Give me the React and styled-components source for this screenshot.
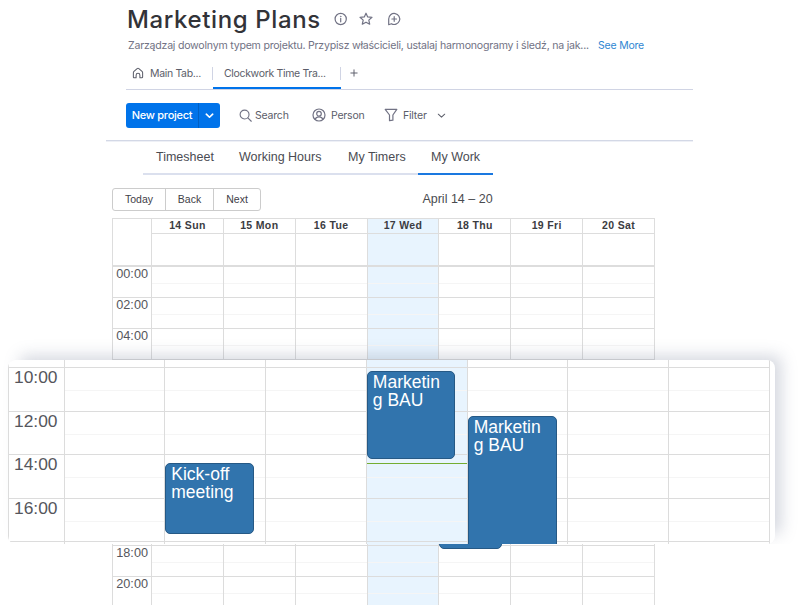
import React from 'react'
import styled, { createGlobalStyle, css } from 'styled-components'

const GlobalStyle = createGlobalStyle`
  * {
    box-sizing: border-box;
  }

  body {
    margin: 0;
    background-color: #fff;
    font-family: Inter, 'Open Sans', sans-serif;
    color: #323338;
  }
`

const Page = styled.div`
  position: relative;
  width: 800px;
  height: 605px;
  overflow: hidden;
  background-color: #fff;
  white-space: nowrap;
`

const BoardHeader = styled.header`
  width: 587px;
  height: 141px;
  margin-left: 106px;
  padding-left: 20px;
  border-bottom: 1px solid #d3d8e6;
  box-shadow: 0 1px 0 #eef0f6;
`

const TitleRow = styled.div`
  display: flex;
  align-items: center;
  height: 38px;
  padding-left: 1px;
  color: #717284;

  & svg {
    flex: none;
  }
`

const Title = styled.h1`
  width: 207px;
  margin: 0;
  font-size: 24px;
  font-weight: 500;
  line-height: 39px;
  letter-spacing: 0.62px;
  color: #323338;
`

const TitleIcons = styled.div`
  display: flex;
  align-items: center;
  gap: 11px;

  & svg:last-child {
    margin-left: 3px;
  }
`

const Description = styled.div`
  display: flex;
  align-items: center;
  height: 14px;
  padding-left: 2px;
  font-size: 10.6px;
  color: #717284;
`

const DescriptionText = styled.span`
  width: 470px;
  letter-spacing: -0.23px;
`

const SeeMore = styled.a`
  font-size: 10.5px;
  letter-spacing: -0.2px;
  color: #2f86d2;
`

const ViewTabs = styled.nav`
  display: flex;
  height: 33px;
  margin-top: 5px;
  padding-left: 6px;
  padding-bottom: 1px;
  font-size: 10.5px;
  color: #5b5d69;
  box-shadow: inset 0 -1px 0 #d0d4e4;
`

const ViewTab = styled.div`
  position: relative;
  display: flex;
  align-items: center;
  gap: 6px;
  width: ${({ $width }) => $width}px;
  padding-left: ${({ $inset }) => $inset || 0}px;
  letter-spacing: -0.33px;

  &::after {
    content: '';
    position: absolute;
    right: 0;
    top: 10px;
    height: 13px;
    border-right: 1px solid ${({ $last }) => ($last ? 'transparent' : '#d0d4e4')};
  }

  ${({ $active }) => $active && css`
    box-shadow: inset 0 -2px 0 #0073ea;
  `}
`

const Toolbar = styled.div`
  display: flex;
  align-items: center;
  height: 50px;
  font-size: 10.5px;
  color: #5b5d69;
`

const NewProject = styled.button`
  display: flex;
  align-items: center;
  width: 94px;
  height: 25px;
  margin: 0 19px 0 0;
  padding: 0;
  border: 0;
  border-radius: 3px;
  background-color: #0073ea;
  font-family: inherit;
  font-size: 11px;
  font-weight: 500;
  letter-spacing: -0.25px;
  color: #fff;
`

const NewProjectLabel = styled.span`
  flex: 1;
  line-height: 25px;
  border-right: 1px solid #0060c4;
`

const NewProjectArrow = styled.span`
  display: flex;
  justify-content: center;
  width: 21px;
`

const Tool = styled.div`
  display: flex;
  align-items: center;
  gap: ${({ $gap }) => $gap}px;
  width: ${({ $width }) => $width}px;
  letter-spacing: -0.2px;

  & svg {
    color: #717284;
  }
`

const WorkTabs = styled.nav`
  display: flex;
  width: 350px;
  height: 34px;
  margin-left: 143px;
  border-bottom: 2px solid #dbe0ee;
  font-family: 'Liberation Sans', Arial, sans-serif;
  font-size: 12.5px;
  line-height: 32px;
  color: #4a4b52;
`

const WorkTab = styled.div`
  width: ${({ $width }) => $width}px;
  height: 34px;
  padding-left: 13px;
  border-bottom: 2px solid ${({ $active }) => ($active ? '#1a78e0' : 'transparent')};
`

const CalendarToolbar = styled.div`
  display: flex;
  align-items: center;
  width: 542px;
  height: 22px;
  margin: 13px 0 8px 112px;
  font-family: 'Liberation Sans', Arial, sans-serif;
  color: #4a4b50;
`

const ButtonGroup = styled.div`
  display: flex;
  height: 23px;
  border: 1px solid #ccc;
  border-radius: 3px;
`

const GroupButton = styled.button`
  width: ${({ $width }) => $width}px;
  padding: 0;
  border: 0;
  border-left: ${({ $first }) => ($first ? '0' : '1px solid #ccc')};
  background: transparent;
  font-family: inherit;
  font-size: 10.5px;
  color: #3f4148;
`

const RangeLabel = styled.div`
  flex: 1;
  text-align: center;
  font-size: 12.5px;
`

const Calendar = styled.section`
  width: 543px;
  margin-left: 112px;
  border-top: 1px solid #ddd;
  border-right: 1px solid #ddd;
  font-family: 'Liberation Sans', Arial, sans-serif;
`

const CalendarHeader = styled.div`
  display: grid;
  grid-template-columns: 39px repeat(7, 1fr);
  height: 48px;
  border-bottom: 2px solid #ddd;
`

const HeaderCell = styled.div`
  border-left: 1px solid #ddd;
  background-color: ${({ $today }) => ($today ? '#e8f4fe' : 'transparent')};
`

const HeaderLabel = styled.div`
  height: 15px;
  border-bottom: 1px solid #ddd;
  text-align: center;
  font-size: 10.5px;
  font-weight: bold;
  line-height: 13px;
  letter-spacing: 0.35px;
  color: #3b3c42;
`

const TimeGrid = styled.div`
  display: grid;
  grid-template-columns: ${({ $gutter }) => $gutter}px repeat(7, 1fr);
`

const Column = styled.div`
  position: relative;
  border-left: 1px solid #dcdcdc;
  background-color: ${({ $today }) => ($today ? '#e8f4fe' : 'transparent')};
`

const Slot = styled.div`
  height: ${({ $height }) => $height}px;
  border-bottom: 1px solid #dcdcdc;

  &::before {
    content: '';
    display: block;
    height: 52%;
    border-bottom: ${({ $plain }) => ($plain ? '0' : '1px solid #f5f5f5')};
  }
`

const TimeSlot = styled.div`
  height: ${({ $height }) => $height}px;
  padding: ${({ $big }) => ($big ? '0 6px 0 0' : '0 3px 0 0')};
  border-bottom: 1px solid #dcdcdc;
  text-align: right;
  font-size: ${({ $big }) => ($big ? 17.4 : 12.7)}px;
  line-height: ${({ $big }) => ($big ? 19 : 14)}px;
  color: #55565c;
`

const Event = styled.div`
  position: absolute;
  top: ${({ $top }) => $top}px;
  left: 0;
  width: ${({ $width }) => $width}px;
  height: ${({ $height }) => $height}px;
  padding: 2px 12px 2px 5px;
  border: 1px solid #265985;
  border-radius: 5px;
  background-color: #3174ad;
  font-size: 17.5px;
  line-height: 17.5px;
  color: #fff;
  white-space: normal;
  overflow-wrap: anywhere;
`

const CurrentTime = styled.div`
  position: absolute;
  top: ${({ $top }) => $top}px;
  left: 0;
  right: 0;
  height: 1px;
  background-color: #74ad31;
`

// clips the panel shadow so that nothing falls under its bottom edge
const MagnifierLayer = styled.div`
  position: absolute;
  top: 320px;
  left: 0;
  width: 800px;
  height: 224px;
  padding: 40px 25px 0 8px;
  overflow: hidden;
`

const Magnifier = styled.section`
  height: 184px;
  padding-right: 5px;
  overflow: hidden;
  border-radius: 8px;
  background-color: #fff;
  box-shadow: 9px -7px 16px -3px rgba(120, 132, 155, 0.32);
  font-family: 'Liberation Sans', Arial, sans-serif;
`

const MagnifiedGrid = styled(TimeGrid)`
  height: 184px;
  border-right: 1px solid #dcdcdc;
`

const days = ['14 Sun', '15 Mon', '16 Tue', '17 Wed', '18 Thu', '19 Fri', '20 Sat']
const today = '17 Wed'
const hours = ['00:00', '02:00', '04:00', '06:00', '08:00', '10:00', '12:00', '14:00', '16:00', '18:00', '20:00']
const magnifiedHours = ['10:00', '12:00', '14:00', '16:00']

const events = {
  '15 Mon': { title: 'Kick-off meeting', top: 103, height: 71, width: 88.5 },
  '17 Wed': { title: 'Marketing BAU', top: 11, height: 88, width: 88.5 },
  '18 Thu': { title: 'Marketing BAU', top: 56, height: 140, width: 89 },
}

const Icon = ({ size = 14, width = 1.2, children }) => (
  <svg
    width={size}
    height={size}
    viewBox="0 0 14 14"
    fill="none"
    stroke="currentColor"
    strokeWidth={width}
    strokeLinecap="round"
    strokeLinejoin="round"
  >
    {children}
  </svg>
)

const InfoIcon = () => (
  <Icon>
    <circle cx="6.7" cy="7" r="5.6" />
    <path d="M6.7 6.4V9.8" />
    <circle cx="6.7" cy="4.4" r="0.35" fill="currentColor" strokeWidth="0.6" />
  </Icon>
)

const StarIcon = () => (
  <Icon>
    <path d="M7 1.2L8.7 4.9L13 5.3L9.8 8.1L10.7 12.2L7 10.2L3.3 12.2L4.2 8.1L1 5.3L5.3 4.9Z" />
  </Icon>
)

const CommentIcon = () => (
  <Icon>
    <path d="M1.7 12.7V7A5.5 5.5 0 1 1 4.4 11.7Z" />
    <path d="M7.2 4.7V9.3M4.9 7H9.5" />
  </Icon>
)

const HomeIcon = () => (
  <Icon size={12}>
    <path d="M1.6 6.6Q1.6 5.7 2.3 5.1L6 1.9Q7 1.1 8 1.9L11.7 5.1Q12.4 5.7 12.4 6.6V11.6Q12.4 12.6 11.4 12.6H9.2V9.6A2.2 2.2 0 0 0 4.8 9.6V12.6H2.6Q1.6 12.6 1.6 11.6Z" />
  </Icon>
)

const SearchIcon = () => (
  <Icon size={13}>
    <circle cx="6" cy="6" r="4.8" />
    <path d="M9.5 9.5L13.2 13.2" />
  </Icon>
)

const PersonIcon = () => (
  <Icon>
    <circle cx="7" cy="7" r="6" />
    <circle cx="7" cy="5.7" r="2.3" />
    <path d="M3.2 11.3Q4.1 8.9 7 8.9T10.8 11.3" />
  </Icon>
)

const FilterIcon = () => (
  <Icon>
    <path d="M1.2 1.4H12.8L8.9 7V12.2L5.5 12.6V7Z" />
  </Icon>
)

const ChevronIcon = ({ bold }) => (
  <Icon size={9} width={bold ? 2.6 : 1.6}>
    <path d="M2 5L7 9.7L12 5" />
  </Icon>
)

const PlusIcon = () => (
  <Icon size={8} width={1.7}>
    <path d="M7 1.5V12.5M1.5 7H12.5" />
  </Icon>
)

const WeekCalendar = () => (
  <Calendar>
    <CalendarHeader>
      <HeaderCell />
      {days.map((day) => (
        <HeaderCell key={day} $today={day === today}>
          <HeaderLabel>{day}</HeaderLabel>
        </HeaderCell>
      ))}
    </CalendarHeader>
    <TimeGrid $gutter={39}>
      <Column>
        {hours.map((hour) => <TimeSlot key={hour} $height={31}>{hour}</TimeSlot>)}
      </Column>
      {days.map((day) => (
        <Column key={day} $today={day === today}>
          {hours.map((hour) => <Slot key={hour} $height={31} />)}
          {day === '18 Thu' && <Event $top={190} $height={92} $width={63} />}
        </Column>
      ))}
    </TimeGrid>
  </Calendar>
)

const MagnifiedCalendar = () => (
  <MagnifierLayer>
    <Magnifier>
      <MagnifiedGrid $gutter={55.5}>
        <Column>
          <Slot $height={8} $plain />
          {magnifiedHours.map((hour) => (
            <TimeSlot key={hour} $height={43.5} $big>{hour}</TimeSlot>
          ))}
        </Column>
        {days.map((day) => {
          const event = events[day]

          return (
            <Column key={day} $today={day === today}>
              <Slot $height={8} $plain />
              {magnifiedHours.map((hour) => <Slot key={hour} $height={43.5} />)}
              {event && (
                <Event $top={event.top} $height={event.height} $width={event.width}>
                  {event.title}
                </Event>
              )}
              {day === today && <CurrentTime $top={103} />}
            </Column>
          )
        })}
      </MagnifiedGrid>
    </Magnifier>
  </MagnifierLayer>
)

const App = () => (
  <>
    <GlobalStyle />
    <Page>
      <BoardHeader>
        <TitleRow>
          <Title>Marketing Plans</Title>
          <TitleIcons>
            <InfoIcon />
            <StarIcon />
            <CommentIcon />
          </TitleIcons>
        </TitleRow>
        <Description>
          <DescriptionText>
            Zarządzaj dowolnym typem projektu. Przypisz właścicieli, ustalaj harmonogramy i śledź, na jak...
          </DescriptionText>
          <SeeMore>See More</SeeMore>
        </Description>
        <ViewTabs>
          <ViewTab $width={81}><HomeIcon />Main Tab...</ViewTab>
          <ViewTab $width={128} $inset={11} $active>Clockwork Time Tra...</ViewTab>
          <ViewTab $width={30} $inset={9} $last><PlusIcon /></ViewTab>
        </ViewTabs>
        <Toolbar>
          <NewProject>
            <NewProjectLabel>New project</NewProjectLabel>
            <NewProjectArrow><ChevronIcon bold /></NewProjectArrow>
          </NewProject>
          <Tool $width={73} $gap={3}><SearchIcon />Search</Tool>
          <Tool $width={72} $gap={5}><PersonIcon />Person</Tool>
          <Tool $width={53} $gap={5}><FilterIcon />Filter</Tool>
          <ChevronIcon />
        </Toolbar>
      </BoardHeader>
      <WorkTabs>
        <WorkTab $width={83}>Timesheet</WorkTab>
        <WorkTab $width={109}>Working Hours</WorkTab>
        <WorkTab $width={83}>My Timers</WorkTab>
        <WorkTab $width={75} $active>My Work</WorkTab>
      </WorkTabs>
      <CalendarToolbar>
        <ButtonGroup>
          <GroupButton $width={52} $first>Today</GroupButton>
          <GroupButton $width={48}>Back</GroupButton>
          <GroupButton $width={47}>Next</GroupButton>
        </ButtonGroup>
        <RangeLabel>April 14 – 20</RangeLabel>
      </CalendarToolbar>
      <WeekCalendar />
      <MagnifiedCalendar />
    </Page>
  </>
)

export default App
